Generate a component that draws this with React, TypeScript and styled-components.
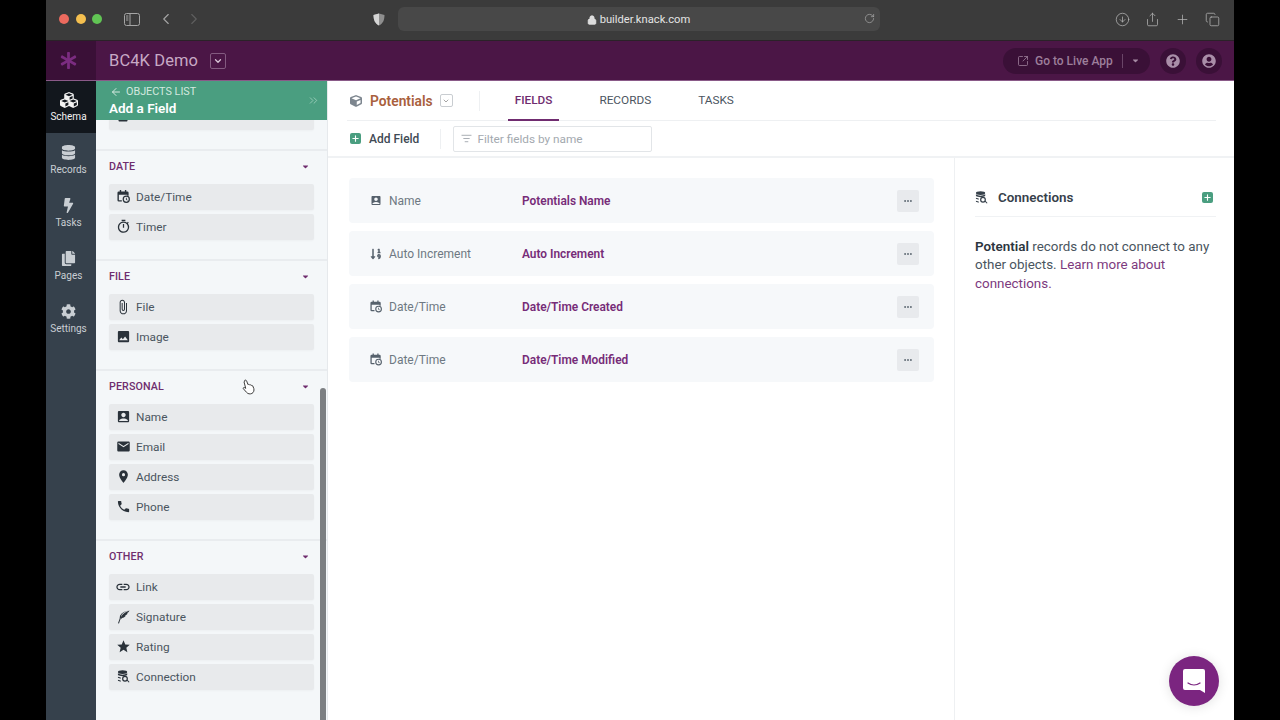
import React from "react";
import styled, { createGlobalStyle } from "styled-components";
import {
  ArrowLeft,
  ChevronLeft,
  ChevronRight,
  ChevronDown,
  ChevronsRight,
  ArrowDownCircle,
  Share,
  Plus,
  Copy,
  Lock,
  RotateCw,
  ListFilter,
  SquareArrowOutUpRight,
  Ellipsis,
} from "lucide-react";
import { FaCubes, FaDatabase, FaBolt, FaCopy, FaCog, FaAsterisk, FaCaretDown, FaCube, FaQuestionCircle, FaUserCircle, FaSortNumericDown } from "react-icons/fa";
import { MdOutlineTimer, MdAttachFile, MdImage, MdAccountBox, MdEmail, MdPlace, MdPhone, MdLink, MdStar } from "react-icons/md";

const GlobalStyle = createGlobalStyle`
  html, body { margin: 0; padding: 0; background: #000; height: 100%; overflow: hidden; }
  * { box-sizing: border-box; }
  body { font-family: "Roboto", "Noto Sans", "Liberation Sans", sans-serif; }
`;

const Screen = styled.div`
  width: 1188px;
  height: 720px;
  margin-left: 46px;
  display: flex;
  flex-direction: column;
  position: relative;
  overflow: hidden;
  background: #fff;
`;

/* browser chrome */
const Chrome = styled.div`
  height: 41px;
  flex: none;
  background: #3b3b3b;
  border-bottom: 1px solid #2a2228;
  display: flex;
  align-items: center;
  padding: 0 14px 2px 13px;
  color: #a9a9a9;
`;

const Light = styled.span<{ $c: string }>`
  width: 10px;
  height: 10px;
  border-radius: 50%;
  margin-right: 6.5px;
  background: ${(p) => p.$c};
`;

const ChromeIcons = styled.div`
  display: flex;
  align-items: center;
  margin-left: 15px;
  gap: 10px;
  > svg:first-child { margin-right: 7px; }
`;

const ShieldWrap = styled.div`
  margin-left: 170px;
  margin-right: 13px;
  display: flex;
`;

const UrlBar = styled.div`
  width: 482px;
  height: 24px;
  border-radius: 6px;
  background: #484848;
  display: flex;
  align-items: center;
  justify-content: center;
  position: relative;
  color: #e4e4e4;
  font-size: 11.2px;
  gap: 3px;
  padding-top: 1px;
`;

const Reload = styled.span`
  position: absolute;
  right: 5px;
  top: 6px;
  display: flex;
  color: #aaa;
`;

const ChromeRight = styled.div`
  margin-left: auto;
  display: flex;
  align-items: center;
  gap: 15px;
  color: #b5b5b5;
`;

/* purple app bar */
const AppBar = styled.div`
  height: 40px;
  flex: none;
  background: #4b1646;
  border-bottom: 1px solid #8a5a88;
  display: flex;
  align-items: center;
`;

const LogoBlock = styled.div`
  width: 50px;
  height: 39px;
  background: #3a1037;
  color: #7b2c80;
  display: flex;
  align-items: center;
  justify-content: center;
  padding-right: 5px;
`;

const AppName = styled.div`
  margin-left: 13px;
  color: #c7a9c5;
  font-size: 16.5px;
  letter-spacing: 0.1px;
`;

const AppCaret = styled.span`
  width: 16px;
  height: 16px;
  margin-left: 12px;
  border: 1px solid #835a80;
  border-radius: 2px;
  color: #d9c6d8;
  display: flex;
  align-items: center;
  justify-content: center;
`;

const AppActions = styled.div`
  margin-left: auto;
  margin-right: 12px;
  display: flex;
  align-items: center;
  gap: 10px;
`;

const LiveButton = styled.div`
  width: 147px;
  height: 26px;
  border-radius: 13px;
  background: #3a1037;
  color: #9d7f9b;
  font-size: 12px;
  font-weight: 500;
  display: flex;
  align-items: center;
  padding-left: 14px;
  gap: 6px;
`;

const LiveSplit = styled.span`
  width: 1px;
  height: 14px;
  background: #6a4568;
  margin-left: 3px;
`;

const LiveCaret = styled.span`
  display: flex;
  margin-left: 2px;
  color: #a68ba4;
`;

const RoundButton = styled.div`
  width: 26px;
  height: 26px;
  border-radius: 50%;
  background: #3a1037;
  color: #a98ea8;
  display: flex;
  align-items: center;
  justify-content: center;
`;

/* body */
const Body = styled.div`
  flex: 1;
  min-height: 0;
  display: flex;
`;

const Nav = styled.nav`
  width: 50px;
  flex: none;
  background: #36414c;
  display: flex;
  flex-direction: column;
`;

const NavItem = styled.div<{ $active?: boolean }>`
  height: ${(p) => (p.$active ? "52px" : "53px")};
  background: ${(p) => (p.$active ? "#12171d" : "transparent")};
  color: ${(p) => (p.$active ? "#f3f3f3" : "#c9ced3")};
  display: flex;
  flex-direction: column;
  align-items: center;
  padding: ${(p) => (p.$active ? "10px" : "12px")} 5px 0 0;
  gap: ${(p) => (p.$active ? "2px" : "4px")};
  font-size: 10px;
  svg { flex: none; }
`;

const Panel = styled.aside`
  width: 232px;
  flex: none;
  background: #f4f7f9;
  border-right: 1px solid #e6e9ec;
  display: flex;
  flex-direction: column;
  position: relative;
`;

const PanelHead = styled.div`
  height: 39px;
  flex: none;
  background: #4a9e80;
  padding: 5px 13px;
  position: relative;
  z-index: 1;
`;

const BackLink = styled.div`
  display: flex;
  align-items: center;
  gap: 4px;
  margin-left: 1px;
  color: #d3e8df;
  font-size: 10.8px;
  line-height: 12px;
`;

const PanelTitle = styled.div`
  color: #fff;
  font-size: 13.5px;
  font-weight: 600;
  line-height: 16px;
  margin-top: 2px;
`;

const Collapse = styled.span`
  position: absolute;
  right: 7px;
  top: 13px;
  display: flex;
  color: #a3d2bf;
`;

const PanelScroll = styled.div`
  flex: 1;
  min-height: 0;
  overflow: hidden;
`;

const Section = styled.section<{ $last?: boolean }>`
  border-bottom: ${(p) => (p.$last ? "none" : "2px solid #e9ecef")};
  padding: 0 13px 19px;
`;

const SectionHead = styled.div`
  height: 33px;
  display: flex;
  align-items: center;
  justify-content: space-between;
  color: #6f2d6e;
  font-size: 10.7px;
  font-weight: 500;
  letter-spacing: 0.1px;
  padding-bottom: 1px;
  svg { color: #6f2d6e; margin-right: 4px; }
`;

const Items = styled.div`
  display: flex;
  flex-direction: column;
  gap: 4px;
`;

const Item = styled.div<{ $clip?: boolean }>`
  height: 26px;
  border-radius: 2px;
  background: #e8eaec;
  display: flex;
  align-items: center;
  padding-left: 8px;
  gap: 7px;
  color: #4a5560;
  font-size: 11.8px;
  margin-top: ${(p) => (p.$clip ? "-16.5px" : "0")};
  box-shadow: 0 1px 2px rgba(0, 0, 0, 0.03);
`;

const ItemIcon = styled.span`
  width: 12px;
  height: 14px;
  color: #2a323a;
  display: flex;
  align-items: center;
  justify-content: center;
  svg { flex: none; }
`;

const ScrollThumb = styled.div`
  position: absolute;
  right: 1px;
  top: 307px;
  bottom: 0;
  width: 6px;
  border-radius: 3px 3px 0 0;
  background: #7c7f82;
`;

const Pointer = styled.div`
  position: absolute;
  left: 145px;
  top: 298px;
  display: flex;
`;

const Main = styled.main`
  flex: 1;
  min-width: 0;
  display: flex;
  flex-direction: column;
`;

const TabRow = styled.div`
  height: 40px;
  flex: none;
  margin: 0 18px 0 19px;
  padding-left: 3px;
  border-bottom: 1px solid #eef0f2;
  display: flex;
  align-items: center;
`;

const ObjectName = styled.div`
  color: #a9603d;
  font-size: 13.8px;
  font-weight: 600;
  margin-left: 8px;
`;

const ObjectCaret = styled.span`
  width: 13px;
  height: 13px;
  margin-left: 7px;
  border: 1px solid #c9cdd1;
  border-radius: 2px;
  color: #777;
  display: flex;
  align-items: center;
  justify-content: center;
`;

const TabDivider = styled.span`
  width: 1px;
  height: 20px;
  background: #eef0f2;
  margin-left: 26px;
  margin-right: 28px;
`;

const Tab = styled.div<{ $active?: boolean }>`
  height: 40px;
  margin-bottom: -1px;
  padding: 0 7px;
  margin-right: 33px;
  display: flex;
  align-items: center;
  font-size: 11.8px;
  font-weight: ${(p) => (p.$active ? 500 : 400)};
  color: ${(p) => (p.$active ? "#702c70" : "#4b555f")};
  border-bottom: 2px solid ${(p) => (p.$active ? "#702c70" : "transparent")};
`;

const ToolRow = styled.div`
  height: 37px;
  flex: none;
  border-bottom: 2px solid #f0f2f4;
  display: flex;
  align-items: center;
  padding-left: 22px;
`;

const PlusBox = styled.span`
  width: 11px;
  height: 11px;
  border-radius: 2px;
  background: #4a9e80;
  color: #fff;
  display: flex;
  align-items: center;
  justify-content: center;
`;

const AddLabel = styled.div`
  color: #3f4a55;
  font-size: 12px;
  font-weight: 500;
  margin-left: 8px;
`;

const ToolDivider = styled.span`
  width: 1px;
  height: 20px;
  background: #eef0f2;
  margin: 0 12px 0 21px;
`;

const FilterBox = styled.div`
  width: 199px;
  height: 26px;
  border: 1px solid #e2e5e8;
  border-radius: 2px;
  display: flex;
  align-items: center;
  padding-left: 7px;
  gap: 5px;
  color: #a3a9af;
  font-size: 11.8px;
`;

const Content = styled.div`
  flex: 1;
  min-height: 0;
  display: flex;
`;

const FieldsCol = styled.div`
  width: 627px;
  flex: none;
  border-right: 1px solid #eef0f2;
  padding: 20px 20px 0 21px;
  display: flex;
  flex-direction: column;
  gap: 8.1px;
`;

const FieldRow = styled.div`
  height: 45px;
  flex: none;
  background: #f6f8fa;
  border-radius: 4px;
  display: flex;
  align-items: center;
  padding: 0 15px 0 21px;
`;

const FieldType = styled.div`
  width: 152px;
  display: flex;
  align-items: center;
  gap: 7px;
  color: #6e7882;
  font-size: 12px;
`;

const FieldTypeIcon = styled.span`
  width: 12px;
  display: flex;
  justify-content: center;
  color: #56616c;
`;

const FieldName = styled.div`
  color: #762c78;
  font-size: 11.9px;
  font-weight: 600;
`;

const MoreButton = styled.span`
  width: 22px;
  height: 22px;
  margin-left: auto;
  border-radius: 2px;
  background: #e8eaed;
  color: #5b6670;
  display: flex;
  align-items: center;
  justify-content: center;
`;

const SideCol = styled.div`
  flex: 1;
  padding: 20px 18px 0 20px;
`;

const SideHead = styled.div`
  height: 39px;
  border-bottom: 1px solid #f0f2f4;
  display: flex;
  align-items: center;
  color: #36404a;
  font-size: 13.4px;
  font-weight: 600;
  gap: 10px;
`;

const SidePlus = styled.span`
  margin-left: auto;
  margin-right: 3px;
  display: flex;
`;

const SideText = styled.p`
  margin: 21px 0 0;
  color: #4a5560;
  font-size: 13.4px;
  line-height: 18.3px;
  b { color: #2c353e; font-weight: 600; }
  a { color: #7d3a7e; text-decoration: none; }
`;

const Messenger = styled.div`
  position: absolute;
  right: 15px;
  bottom: 14px;
  width: 50px;
  height: 50px;
  border-radius: 50%;
  background: #7b2580;
  box-shadow: 0 1px 12px rgba(0, 0, 0, 0.12);
  display: flex;
  align-items: center;
  justify-content: center;
`;

const CalendarClock = ({ size = 13 }: { size?: number }) => (
  <svg width={size} height={size} viewBox="0 0 14 14" fill="currentColor">
    <path d="M3 0h1.5v1.5h4V0H10v1.5h1A1.5 1.5 0 0 1 12.5 3v3.2H11V5H2v6h3.2v1.5H2A1.5 1.5 0 0 1 .5 11V3A1.5 1.5 0 0 1 2 1.5h1z" />
    <circle cx="10" cy="10" r="3.3" fill="none" stroke="currentColor" strokeWidth="1.3" />
    <path d="M9.6 8.4h.9v1.7l1.1.7-.4.6-1.6-1z" />
  </svg>
);

const ConnectionIcon = ({ size = 13 }: { size?: number }) => (
  <svg width={size} height={size} viewBox="0 0 14 14" fill="currentColor">
    <ellipse cx="6" cy="2.2" rx="5" ry="2" />
    <path d="M1 3.6c1.2 1 3 1.4 5 1.4s3.8-.4 5-1.4V5.4C9.8 6.2 8 6.6 6 6.6S2.2 6.2 1 5.4z" />
    <path d="M1 7.2l3 1V9.4l-3-1zM1 10.4l3 1v1.2l-3-1z" />
    <circle cx="8.6" cy="9.4" r="2.5" fill="none" stroke="currentColor" strokeWidth="1.3" />
    <path d="M10.4 11l.9-.6 2.2 2.4-.9.7z" />
  </svg>
);

const QuillIcon = () => (
  <svg width="13" height="14" viewBox="0 0 13 14" fill="currentColor">
    <path d="M12.500 .5C9 1 6 2.500 4.500 5L4 7.500 3.300 9.500 2 13.500 1 13.300 2.600 8.800l.4-3C4.800 2.500 8.500.800 12.500.5z" />
    <path d="M12.500 .5c-.6 1.500-1.500 2.300-2.700 2.700l1 .2c-.7 1-1.700 1.600-2.800 1.900l.9.4C7.800 6.800 6.600 7.600 5 8l-1.500 1.700.8-3.500C6.200 3.500 9 1.500 12.500 .5z" />
  </svg>
);

const groups = [
  {
    title: "DATE",
    items: [
      { label: "Date/Time", icon: <CalendarClock /> },
      { label: "Timer", icon: <MdOutlineTimer size={15} /> },
    ],
  },
  {
    title: "FILE",
    items: [
      { label: "File", icon: <MdAttachFile size={16} /> },
      { label: "Image", icon: <MdImage size={15} /> },
    ],
  },
  {
    title: "PERSONAL",
    items: [
      { label: "Name", icon: <MdAccountBox size={15} /> },
      { label: "Email", icon: <MdEmail size={15} /> },
      { label: "Address", icon: <MdPlace size={15} /> },
      { label: "Phone", icon: <MdPhone size={15} /> },
    ],
  },
  {
    title: "OTHER",
    items: [
      { label: "Link", icon: <MdLink size={16} /> },
      { label: "Signature", icon: <QuillIcon /> },
      { label: "Rating", icon: <MdStar size={15} /> },
      { label: "Connection", icon: <ConnectionIcon /> },
    ],
  },
];

const fields = [
  { type: "Name", name: "Potentials Name", icon: <MdAccountBox size={15} /> },
  { type: "Auto Increment", name: "Auto Increment", icon: <FaSortNumericDown size={12} /> },
  { type: "Date/Time", name: "Date/Time Created", icon: <CalendarClock size={13} /> },
  { type: "Date/Time", name: "Date/Time Modified", icon: <CalendarClock size={13} /> },
];

const App = () => {
  return (
    <>
      <GlobalStyle />
      <Screen>
        <Chrome>
          <Light $c="#ec6a5e" />
          <Light $c="#f4bf4f" />
          <Light $c="#61c554" />
          <ChromeIcons>
            <svg width="16" height="13" viewBox="0 0 16 13" fill="none" stroke="#a5a5a5" strokeWidth="1">
              <rect x="0.5" y="0.5" width="15" height="12" rx="2" />
              <path d="M6 .5v12M2 3h2.4M2 5h2.4M2 7h2.4" />
            </svg>
            <ChevronLeft size={18} strokeWidth={1.5} color="#a5a5a5" />
            <ChevronRight size={18} strokeWidth={1.5} color="#5f5f5f" />
          </ChromeIcons>
          <ShieldWrap>
            <svg width="12" height="13" viewBox="0 0 12 13">
              <path d="M6 0.5 11.500 2c0 5-1.500 8.500-5.500 10.500C2 10.500 .5 7 .5 2z" fill="#8e8e8e" />
              <path d="M6 0.5 .5 2C.5 7 2 10.500 6 12.500z" fill="#d5d5d5" />
            </svg>
          </ShieldWrap>
          <UrlBar>
            <Lock size={10} fill="#dcdcdc" strokeWidth={2.2} />
            builder.knack.com
            <Reload>
              <RotateCw size={11} strokeWidth={1.5} />
            </Reload>
          </UrlBar>
          <ChromeRight>
            <ArrowDownCircle size={15} strokeWidth={1.2} />
            <Share size={15} strokeWidth={1.2} />
            <Plus size={15} strokeWidth={1.2} />
            <Copy size={15} strokeWidth={1.2} />
          </ChromeRight>
        </Chrome>
        <AppBar>
          <LogoBlock>
            <FaAsterisk size={17} />
          </LogoBlock>
          <AppName>BC4K Demo</AppName>
          <AppCaret>
            <ChevronDown size={10} strokeWidth={3} />
          </AppCaret>
          <AppActions>
            <LiveButton>
              <SquareArrowOutUpRight size={12} strokeWidth={1.6} />
              Go to Live App
              <LiveSplit />
              <LiveCaret>
                <FaCaretDown size={9} />
              </LiveCaret>
            </LiveButton>
            <RoundButton>
              <FaQuestionCircle size={14} />
            </RoundButton>
            <RoundButton>
              <FaUserCircle size={14} />
            </RoundButton>
          </AppActions>
        </AppBar>
        <Body>
          <Nav>
            <NavItem $active>
              <FaCubes size={18} />
              Schema
            </NavItem>
            <NavItem>
              <FaDatabase size={15} />
              Records
            </NavItem>
            <NavItem>
              <FaBolt size={15} />
              Tasks
            </NavItem>
            <NavItem>
              <FaCopy size={15} />
              Pages
            </NavItem>
            <NavItem>
              <FaCog size={15} />
              Settings
            </NavItem>
          </Nav>
          <Panel>
            <PanelHead>
              <BackLink>
                <ArrowLeft size={12} />
                OBJECTS LIST
              </BackLink>
              <PanelTitle>Add a Field</PanelTitle>
              <Collapse>
                <ChevronsRight size={13} strokeWidth={1.5} />
              </Collapse>
            </PanelHead>
            <PanelScroll>
              <Section>
                <Items>
                  <Item $clip>
                    <ItemIcon>
                      <MdImage size={12} />
                    </ItemIcon>
                  </Item>
                </Items>
              </Section>
              {groups.map((g, i) => (
                <Section key={g.title} $last={i === groups.length - 1}>
                  <SectionHead>
                    {g.title}
                    <FaCaretDown size={9} />
                  </SectionHead>
                  <Items>
                    {g.items.map((it) => (
                      <Item key={it.label}>
                        <ItemIcon>{it.icon}</ItemIcon>
                        {it.label}
                      </Item>
                    ))}
                  </Items>
                </Section>
              ))}
            </PanelScroll>
            <ScrollThumb />
            <Pointer>
              <svg width="15" height="17" viewBox="0 0 14 16">
                <path
                  d="M3.500 1.200c.8-.4 1.500 0 1.800.8l1.200 3.300c.5-.4 1.300-.3 1.600.3.5-.3 1.200-.1 1.500.4.500-.2 1.100 0 1.400.5l1 2.500c.5 1.800-.2 3.800-1.800 4.600-1.700.8-3.800.5-5-1L2.200 9.200c-.4-.6 0-1.300.8-1.200l1.400.8-1.600-6c-.1-.3.2-.5.700-.6z"
                  fill="#fff"
                  stroke="#333"
                  strokeWidth="0.9"
                />
              </svg>
            </Pointer>
          </Panel>
          <Main>
            <TabRow>
              <FaCube size={12} color="#7d868f" />
              <ObjectName>Potentials</ObjectName>
              <ObjectCaret>
                <ChevronDown size={8} strokeWidth={2} />
              </ObjectCaret>
              <TabDivider />
              <Tab $active>FIELDS</Tab>
              <Tab>RECORDS</Tab>
              <Tab>TASKS</Tab>
            </TabRow>
            <ToolRow>
              <PlusBox>
                <Plus size={9} strokeWidth={3} />
              </PlusBox>
              <AddLabel>Add Field</AddLabel>
              <ToolDivider />
              <FilterBox>
                <ListFilter size={11} strokeWidth={1.6} color="#8b9299" />
                Filter fields by name
              </FilterBox>
            </ToolRow>
            <Content>
              <FieldsCol>
                {fields.map((f) => (
                  <FieldRow key={f.name}>
                    <FieldType>
                      <FieldTypeIcon>{f.icon}</FieldTypeIcon>
                      {f.type}
                    </FieldType>
                    <FieldName>{f.name}</FieldName>
                    <MoreButton>
                      <Ellipsis size={10} strokeWidth={2.5} />
                    </MoreButton>
                  </FieldRow>
                ))}
              </FieldsCol>
              <SideCol>
                <SideHead>
                  <ConnectionIcon size={13} />
                  Connections
                  <SidePlus>
                    <PlusBox>
                      <Plus size={9} strokeWidth={3} />
                    </PlusBox>
                  </SidePlus>
                </SideHead>
                <SideText>
                  <b>Potential</b> records do not connect to any other objects. <a>Learn more about connections.</a>
                </SideText>
              </SideCol>
            </Content>
          </Main>
        </Body>
        <Messenger>
          <svg width="24" height="26" viewBox="0 0 24 26">
            <path d="M3 1h18a2 2 0 0 1 2 2v22l-5-3H3a2 2 0 0 1-2-2V3a2 2 0 0 1 2-2z" fill="#fff" />
            <path d="M6 15c3.500 2.400 8.500 2.400 12 0" fill="none" stroke="#7b2580" strokeWidth="1.300" strokeLinecap="round" />
          </svg>
        </Messenger>
      </Screen>
    </>
  );
};

export default App;
